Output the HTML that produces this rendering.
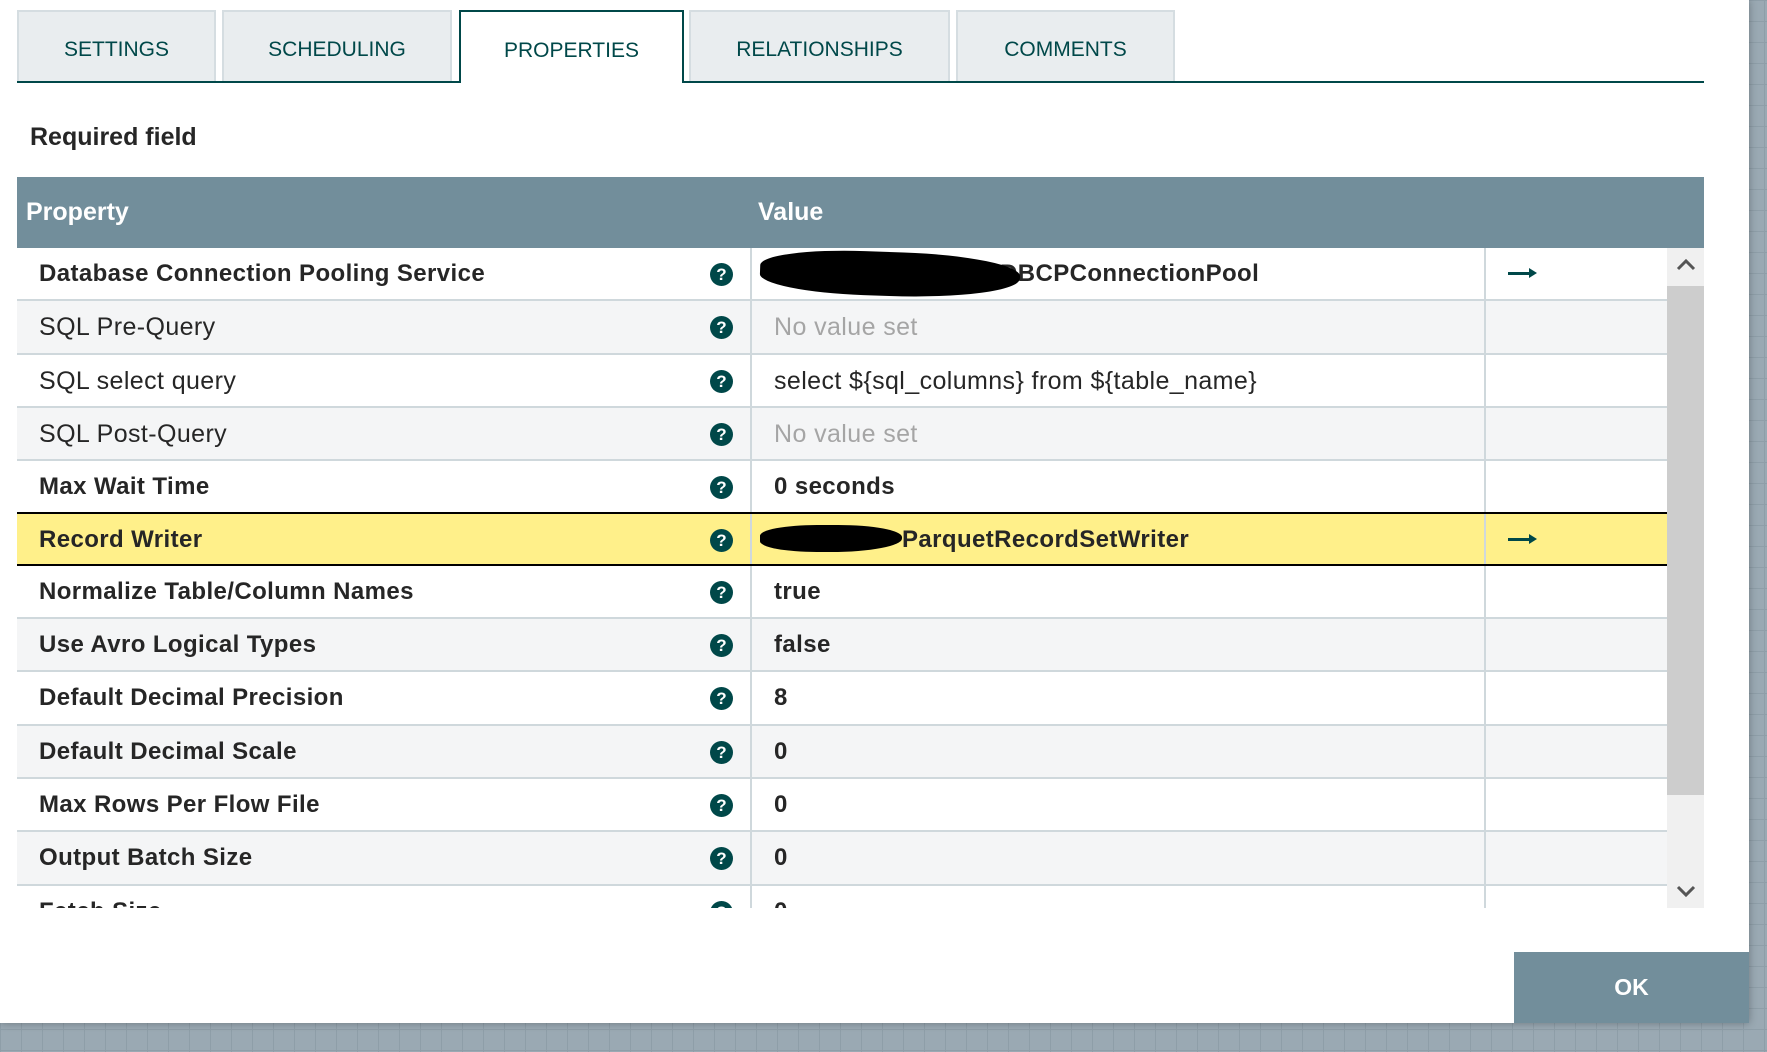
<!DOCTYPE html>
<html><head><meta charset="utf-8"><style>
*{box-sizing:border-box;margin:0;padding:0}
body{width:1767px;height:1052px;overflow:hidden;position:relative;font-family:"Liberation Sans",sans-serif;color:#262626;
background:#9aa9b3;background-image:linear-gradient(#8e9ea8 1px,transparent 1px),linear-gradient(90deg,#8e9ea8 1px,transparent 1px);background-size:21px 21px}
.dlg{position:absolute;left:0;top:0;width:1749px;height:1023px;background:#fff;box-shadow:0 0 8px rgba(0,0,0,.3)}
.tab{position:absolute;top:10px;height:72px;padding-top:6px;background:#e9edef;border:2px solid #d5dde1;border-bottom:none;color:#004849;font-size:21px;display:flex;align-items:center;justify-content:center;letter-spacing:0}
.tab.act{background:#fff;border:2px solid #004849;border-bottom:none;height:73px;z-index:2}
.tabline{position:absolute;left:17px;top:81px;width:1687px;height:2px;background:#004849}
.req{position:absolute;left:30px;top:123px;font-size:25px;font-weight:bold;letter-spacing:0}
.hdr{position:absolute;left:17px;top:177px;width:1687px;height:71px;background:#728e9b;color:#fff;font-weight:bold;font-size:25px;letter-spacing:0}
.hdr span{position:absolute;top:21px}
.body{position:absolute;left:17px;top:248px;width:1650px;height:660px;overflow:hidden}
.row{position:relative;height:53.3px;border-bottom:2px solid #cfd8dc;font-size:25px;letter-spacing:0.4px}
.row:nth-child(even){background:#f4f5f6}
.row.sel{background:#fff08a;border-top:2px solid #000;border-bottom:2px solid #000;margin-top:-2px}
.row .n{position:absolute;left:22px;top:12px;white-space:nowrap}
.b{font-weight:bold;font-size:24px;letter-spacing:0.4px}
.row .q{position:absolute;left:693px;top:15px;width:23px;height:23px;border-radius:50%;background:#004849;color:#fff;font-size:17px;font-weight:bold;text-align:center;line-height:23px;letter-spacing:0}
.row .c1{position:absolute;left:733px;top:0;bottom:0;width:2px;background:#cfd8dc}
.row .c2{position:absolute;left:1467px;top:0;bottom:0;width:2px;background:#cfd8dc}
.row .v{position:absolute;left:757px;top:12px;white-space:nowrap}
.gray{color:#a5a5a5}
.arr{position:absolute;left:1491px;top:24px;width:26px;height:3px;background:#004849}
.arr:after{content:"";position:absolute;right:-3px;top:-4px;border-left:8px solid #004849;border-top:5.5px solid transparent;border-bottom:5.5px solid transparent}
.blot{position:absolute;background:#000;border-radius:40% 45% 50% 40%}
.sb{position:absolute;left:1667px;top:248px;width:37px;height:660px;background:#f0f0f0}
.thumb{position:absolute;left:0;top:38px;width:37px;height:509px;background:#cdcdcd}
.ok{position:absolute;left:1514px;top:952px;width:235px;height:71px;background:#728e9b;color:#fff;font-weight:bold;font-size:23px;display:flex;align-items:center;justify-content:center}
</style></head><body>
<div class="dlg">
<div class="tab" style="left:17px;width:199px">SETTINGS</div>
<div class="tab" style="left:222px;width:230px">SCHEDULING</div>
<div class="tab act" style="left:459px;width:225px">PROPERTIES</div>
<div class="tab" style="left:689px;width:261px">RELATIONSHIPS</div>
<div class="tab" style="left:956px;width:219px">COMMENTS</div>
<div class="tabline"></div>
<div class="req">Required field</div>
<div class="hdr"><span style="left:9px">Property</span><span style="left:741px">Value</span></div>
<div class="body">
<div class="row"><span class="n b">Database Connection Pooling Service</span><span class="q">?</span><span class="c1"></span><span class="v b" style="left:983px">DBCPConnectionPool</span><div class="blot" style="left:743px;top:4px;width:260px;height:44px;transform:rotate(2deg)"></div><span class="c2"></span><span class="arr"></span></div>
<div class="row"><span class="n">SQL Pre-Query</span><span class="q">?</span><span class="c1"></span><span class="v gray">No value set</span><span class="c2"></span></div>
<div class="row"><span class="n">SQL select query</span><span class="q">?</span><span class="c1"></span><span class="v">select ${sql_columns} from ${table_name}</span><span class="c2"></span></div>
<div class="row"><span class="n">SQL Post-Query</span><span class="q">?</span><span class="c1"></span><span class="v gray">No value set</span><span class="c2"></span></div>
<div class="row"><span class="n b">Max Wait Time</span><span class="q">?</span><span class="c1"></span><span class="v b">0 seconds</span><span class="c2"></span></div>
<div class="row sel"><span class="n b">Record Writer</span><span class="q">?</span><span class="c1"></span><span class="v b" style="left:885px">ParquetRecordSetWriter</span><div class="blot" style="left:743px;top:11px;width:142px;height:27px"></div><span class="c2"></span><span class="arr"></span></div>
<div class="row"><span class="n b">Normalize Table/Column Names</span><span class="q">?</span><span class="c1"></span><span class="v b">true</span><span class="c2"></span></div>
<div class="row"><span class="n b">Use Avro Logical Types</span><span class="q">?</span><span class="c1"></span><span class="v b">false</span><span class="c2"></span></div>
<div class="row"><span class="n b">Default Decimal Precision</span><span class="q">?</span><span class="c1"></span><span class="v b">8</span><span class="c2"></span></div>
<div class="row"><span class="n b">Default Decimal Scale</span><span class="q">?</span><span class="c1"></span><span class="v b">0</span><span class="c2"></span></div>
<div class="row"><span class="n b">Max Rows Per Flow File</span><span class="q">?</span><span class="c1"></span><span class="v b">0</span><span class="c2"></span></div>
<div class="row"><span class="n b">Output Batch Size</span><span class="q">?</span><span class="c1"></span><span class="v b">0</span><span class="c2"></span></div>
<div class="row"><span class="n b">Fetch Size</span><span class="q">?</span><span class="c1"></span><span class="v b">0</span><span class="c2"></span></div>
</div>
<div class="sb"><div class="thumb"></div>
<svg style="position:absolute;left:9px;top:10px" width="20" height="14"><path d="M2 11 L10 3 L18 11" stroke="#555" stroke-width="3" fill="none"/></svg>
<svg style="position:absolute;left:9px;top:636px" width="20" height="14"><path d="M2 3 L10 11 L18 3" stroke="#555" stroke-width="3" fill="none"/></svg>
</div>
<div class="ok">OK</div>
</div>
</body></html>
